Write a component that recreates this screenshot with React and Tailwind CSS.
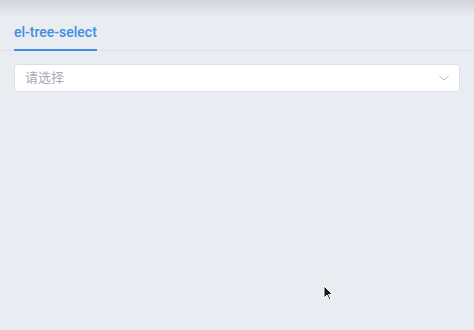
export default function App() {
  return (
    <div
      className="relative h-[330px] w-[474px] overflow-hidden bg-[#e9ecf1]"
      style={{ fontFamily: '"Noto Sans", "Noto Sans CJK SC", sans-serif' }}
    >
      <div className="absolute inset-x-0 top-0 h-4 bg-gradient-to-b from-[#d3d4d9] to-[#e9ecf1]" />
      <div className="relative pt-[23px]">
        <div className="flex border-b border-[#dcdfe6]">
          <div
            className="ml-[14px] -mb-px border-b-2 border-[#3f8fe3] pb-[8px] text-[14px] font-medium leading-[18px] text-[#3f8fe3]"
            style={{ fontFamily: 'Roboto, sans-serif' }}
          >
            el-tree-select
          </div>
        </div>
        <div className="mx-[14px] mt-[13px] flex h-[28px] items-center justify-between rounded-[3px] border border-[#dcdfe6] bg-white pl-[10px] pr-[9px]">
          <span className="text-[13px] text-[#a8abb2]">请选择</span>
          <svg width="12" height="12" viewBox="0 0 12 12" fill="none">
            <path d="M1.5 4 L6 8 L10.5 4" stroke="#b6b9c0" strokeWidth="1" />
          </svg>
        </div>
      </div>
      <svg className="absolute left-[323px] top-[285px]" width="11" height="16" viewBox="0 0 11 16">
        <path d="M1 1 L1 13 L4 10 L6.5 15 L8 14.3 L5.6 9.4 L9.5 9.4 Z" fill="#111" stroke="#fff" strokeWidth="1" />
      </svg>
    </div>
  )
}
